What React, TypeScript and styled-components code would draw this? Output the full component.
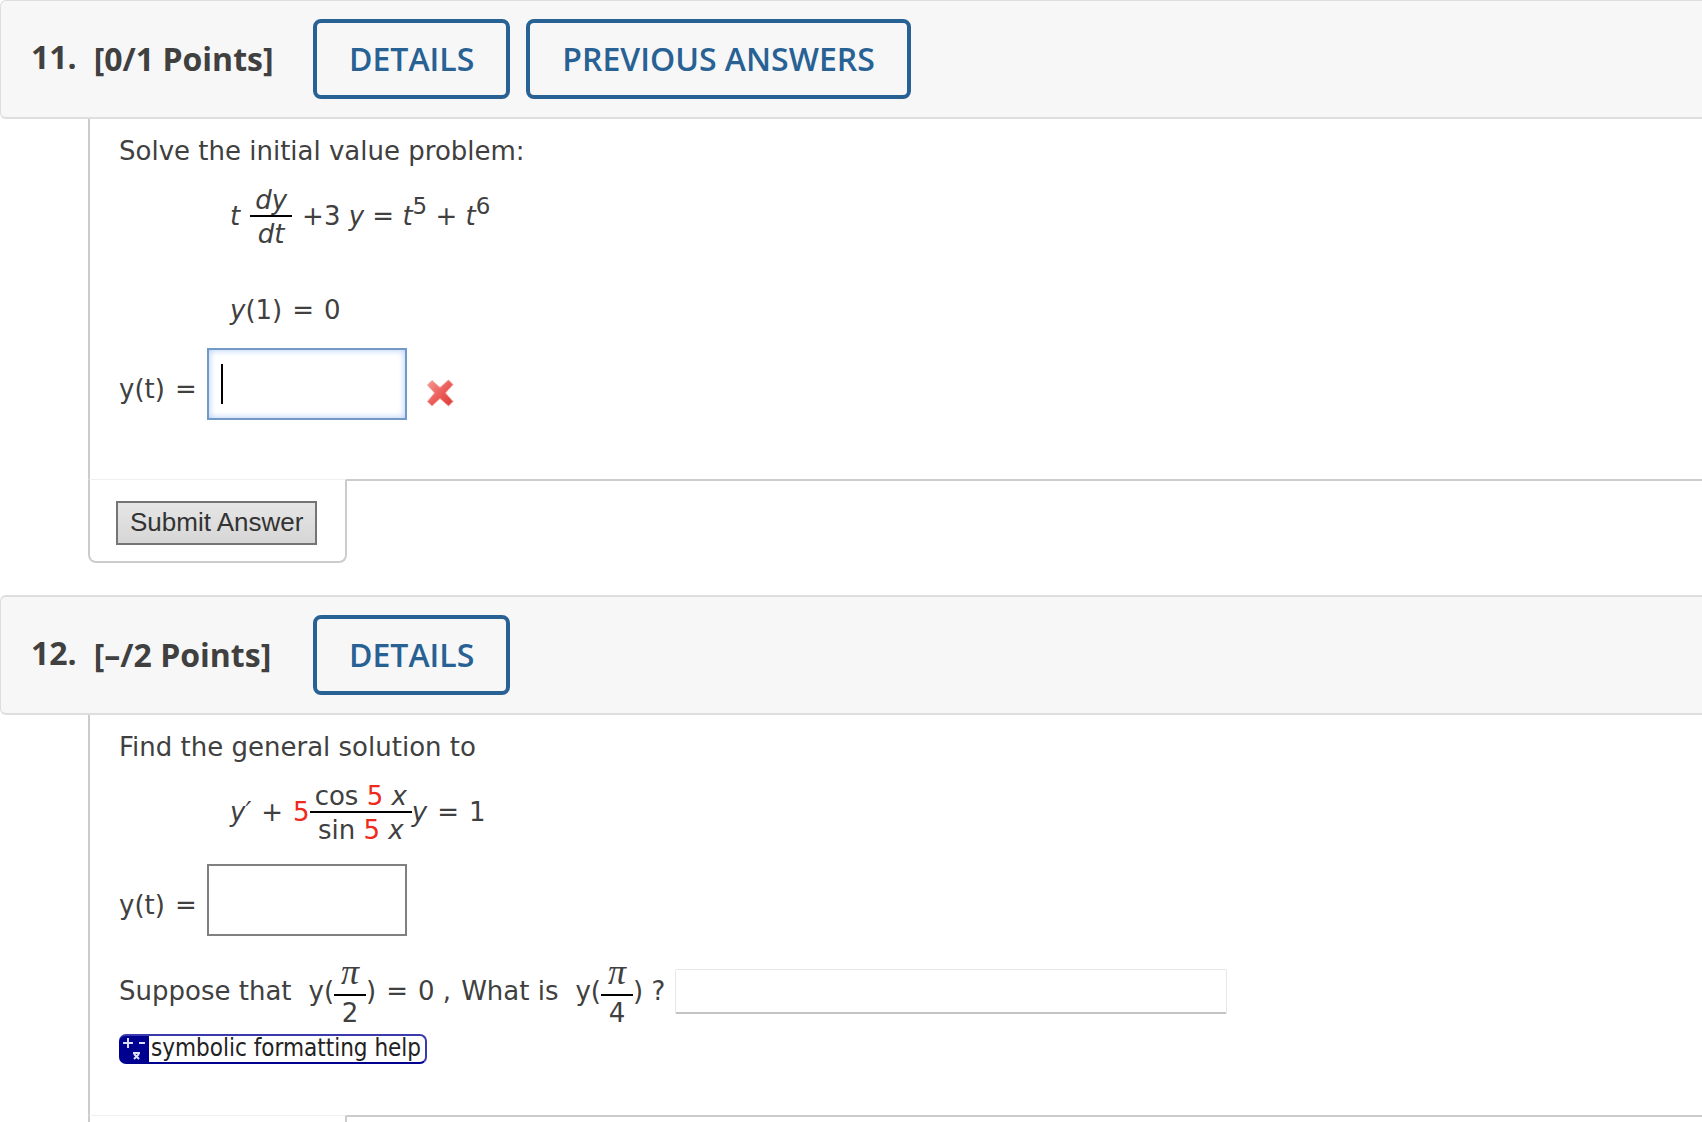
import React from "react";
import styled, { createGlobalStyle } from "styled-components";

const GlobalStyle = createGlobalStyle`
  *, *::before, *::after { box-sizing: border-box; }
  body {
    margin: 0;
    background: #fff;
    color: #404040;
    font-family: Verdana, "DejaVu Sans", sans-serif;
    font-size: 26px;
    line-height: 32px;
  }
`;

const Page = styled.main`
  height: 100vh;
  overflow: hidden;
`;

const Header = styled.header<{ $first?: boolean }>`
  display: flex;
  align-items: center;
  padding: 18px 30px;
  background: #f7f7f7;
  border: solid #dedede;
  border-width: ${(p) => (p.$first ? 1 : 2)}px 0 2px 1px;
  border-radius: 6px 0 0 6px;
  font-family: "Open Sans", sans-serif;
`;

const Title = styled.h2`
  display: flex;
  gap: 17px;
  width: 282px;
  margin: 0;
  padding-top: 2px;
  font-size: 32px;
  line-height: 40px;
  font-weight: 700;
  white-space: nowrap;
`;

const QuestionNumber = styled.span`
  padding-bottom: 4px;
  margin-top: -2px;
`;

const Actions = styled.div`
  display: flex;
  gap: 16px;
`;

const ActionButton = styled.button`
  height: 80px;
  padding: 0 32px 2px;
  border: 4px solid #286194;
  border-radius: 8px;
  background: #f7f7f7;
  color: #286194;
  font-family: "Open Sans", sans-serif;
  font-size: 32px;
  font-weight: 600;
  white-space: nowrap;
`;

const Body = styled.div<{ $bottom: number }>`
  margin-left: 88px;
  padding: 16px 0 ${(p) => p.$bottom}px 29px;
  border-left: 2px solid #ccc;
`;

const Prompt = styled.p`
  margin: 0;
`;

const Equation = styled.div<{ $top?: number }>`
  display: flex;
  align-items: center;
  margin-top: ${(p) => p.$top ?? 14}px;
  padding-left: 111px;
  white-space: pre;
`;

const Terms = styled.span`
  display: inline-flex;
  gap: 10px;
`;

const FractionBox = styled.span<{ $space?: number; $low?: boolean }>`
  display: inline-flex;
  flex-direction: column;
  text-align: center;
  margin: 0 ${(p) => p.$space ?? 0}px;
  padding-top: ${(p) => (p.$low ? 8 : 0)}px;
`;

const Numerator = styled.span`
  padding: 4px 5px 0;
  border-bottom: 2px solid #000;
  line-height: 30px;
`;

const Denominator = styled.span`
  padding: 0 5px;
  line-height: 34px;
`;

const Pi = styled.i`
  padding: 0 2px;
  font-family: "Liberation Serif", serif;
  font-size: 36px;
  line-height: 0;
  vertical-align: 4px;
`;

const Power = styled.sup`
  font-size: 23px;
  line-height: 0;
  vertical-align: 11px;
`;

const Variable = styled.span`
  color: #ee2a1c;
`;

const AnswerRow = styled.div<{ $top: number }>`
  display: flex;
  align-items: flex-end;
  margin-top: ${(p) => p.$top}px;
`;

const AnswerLabel = styled.label`
  display: flex;
  gap: 10px;
  width: 88px;
  padding-bottom: 15px;
  white-space: nowrap;
`;

const AnswerField = styled.span`
  position: relative;
  display: flex;
`;

const AnswerInput = styled.input<{ $active?: boolean }>`
  width: 200px;
  height: 72px;
  padding: 0 14px;
  border: 2px solid ${(p) => (p.$active ? "#7399c6" : "#808080")};
  background: #fff;
  box-shadow: ${(p) => (p.$active ? "inset 0 0 7px #a9caf5" : "none")};
  color: inherit;
  font: inherit;
  outline: none;
`;

const Caret = styled.span`
  position: absolute;
  left: 14px;
  top: 16px;
  width: 2px;
  height: 40px;
  background: #000;
`;

const WrongMark = styled.svg`
  width: 28px;
  height: 28px;
  margin: 0 0 13px 19px;
`;

const FollowUp = styled.div`
  display: flex;
  align-items: center;
  margin-top: 16px;
  gap: 10px;
`;

const FollowUpLabel = styled.label`
  display: flex;
  align-items: center;
  gap: 10px;
  white-space: pre;
`;

const Call = styled.span`
  display: flex;
  align-items: center;
  padding-left: 7px;
`;

const WideInput = styled.input`
  width: 552px;
  height: 45px;
  padding: 0 10px;
  border: 1px solid #e8e8e8;
  border-bottom: 2px solid #c4c4c4;
  border-radius: 2px;
  background: #fff;
  color: inherit;
  font: inherit;
`;

const HelpLink = styled.a`
  display: flex;
  width: 308px;
  height: 30px;
  margin-top: 4px;
  border: 2px solid #3a3aae;
  border-bottom-color: #00008f;
  border-left: 0;
  border-radius: 7px;
  background: linear-gradient(90deg, #000090 30px, #fff 30px);
  color: #222;
  font-family: "DejaVu Sans Condensed", "DejaVu Sans", sans-serif;
  font-size: 24px;
  line-height: 24px;
  text-decoration: none;
  white-space: nowrap;
`;

const HelpIcon = styled.svg`
  flex: none;
  width: 30px;
  height: 26px;
  margin-right: 2px;
`;

const Footer = styled.div`
  display: flex;
  align-items: flex-start;
  margin-left: 88px;
`;

const SubmitTab = styled.div<{ $cut?: boolean }>`
  width: 259px;
  height: ${(p) => (p.$cut ? "100px" : "auto")};
  padding: 21px 26px 16px;
  border: 2px solid #ccc;
  border-top: 1px solid #f0f0f0;
  border-radius: 0 0 8px 8px;
`;

const FooterRule = styled.div`
  flex: 1;
  border-top: 2px solid #ccc;
`;

const SubmitButton = styled.button`
  display: block;
  height: 44px;
  padding: 0 12px 2px;
  border: 2px solid #757575;
  background: linear-gradient(#e6e6e6, #d6d6d6);
  color: #333;
  font-family: Arial, "Liberation Sans", sans-serif;
  font-size: 26px;
  white-space: nowrap;
`;

const Question = styled.section`
  & + & { margin-top: 32px; }
`;

type FractionProps = {
  top: React.ReactNode;
  bottom: React.ReactNode;
  space?: number;
  low?: boolean;
};

function Fraction({ top, bottom, space, low }: FractionProps) {
  return (
    <FractionBox $space={space} $low={low}>
      <Numerator>{top}</Numerator>
      <Denominator>{bottom}</Denominator>
    </FractionBox>
  );
}

export default function App() {
  return (
    <Page>
      <GlobalStyle />
      <Question>
        <Header $first>
          <Title>
            <QuestionNumber>11.</QuestionNumber>
            <span>[0/1 Points]</span>
          </Title>
          <Actions>
            <ActionButton type="button">DETAILS</ActionButton>
            <ActionButton type="button">PREVIOUS ANSWERS</ActionButton>
          </Actions>
        </Header>
        <Body $bottom={59}>
          <Prompt>Solve the initial value problem:</Prompt>
          <Equation>
            <i>t</i>
            <Fraction space={10} top={<i>dy</i>} bottom={<i>dt</i>} />
            <span>
              +3 <i>y</i> = <i>t</i><Power>5</Power> + <i>t</i><Power>6</Power>
            </span>
          </Equation>
          <Equation $top={43}>
            <Terms>
              <span><i>y</i>(1)</span>
              <span>=</span>
              <span>0</span>
            </Terms>
          </Equation>
          <AnswerRow $top={22}>
            <AnswerLabel htmlFor="answer-11">
              <span>y(t)</span>
              <span>=</span>
            </AnswerLabel>
            <AnswerField>
              <AnswerInput id="answer-11" type="text" $active />
              <Caret />
            </AnswerField>
            <WrongMark viewBox="0 0 28 28" role="img" aria-label="Incorrect">
              <defs>
                <linearGradient id="cross" x1="0" y1="0" x2="1" y2="1">
                  <stop offset="0" stopColor="#f49a96" />
                  <stop offset="0.5" stopColor="#ec5f5b" />
                  <stop offset="1" stopColor="#dc3a35" />
                </linearGradient>
              </defs>
              <path
                d="M6 1.5 14 8.5 22.5 1 27 5.5 19.5 14 27 22.5 22.5 27 14 19.5 6 27 1.5 22.5 8.5 14 1.5 6Z"
                fill="url(#cross)"
                stroke="#f2a3a0"
                strokeWidth="1"
                strokeLinejoin="round"
              />
            </WrongMark>
          </AnswerRow>
        </Body>
        <Footer>
          <SubmitTab>
            <SubmitButton type="button">Submit Answer</SubmitButton>
          </SubmitTab>
          <FooterRule />
        </Footer>
      </Question>

      <Question>
        <Header>
          <Title>
            <QuestionNumber>12.</QuestionNumber>
            <span>[–/2 Points]</span>
          </Title>
          <Actions>
            <ActionButton type="button">DETAILS</ActionButton>
          </Actions>
        </Header>
        <Body $bottom={51}>
          <Prompt>Find the general solution to</Prompt>
          <Equation>
            <Terms>
              <i>y′</i>
              <span>+</span>
              <Variable>5</Variable>
            </Terms>
            <Fraction
              top={<>cos <Variable>5</Variable> <i>x</i></>}
              bottom={<>sin <Variable>5</Variable> <i>x</i></>}
            />
            <Terms>
              <i>y</i>
              <span>=</span>
              <span>1</span>
            </Terms>
          </Equation>
          <AnswerRow $top={17}>
            <AnswerLabel htmlFor="answer-12">
              <span>y(t)</span>
              <span>=</span>
            </AnswerLabel>
            <AnswerInput id="answer-12" type="text" />
          </AnswerRow>
          <FollowUp>
            <FollowUpLabel htmlFor="answer-12b">
              <span>Suppose that</span>
              <Call>
                y(
                <Fraction low top={<Pi>π</Pi>} bottom="2" />
                )
              </Call>
              <span>=</span>
              <span>0 ,</span>
              <span>What is</span>
              <Call>
                y(
                <Fraction low top={<Pi>π</Pi>} bottom="4" />
                ) ?
              </Call>
            </FollowUpLabel>
            <WideInput id="answer-12b" type="text" />
          </FollowUp>
          <HelpLink href="#symbolic-formatting">
            <HelpIcon viewBox="0 0 30 26" aria-hidden="true">
              <path
                d="M4 7h10M9 2v10M20 7h6M14 17h7M15 23l5-5M20 23l-5-5"
                fill="none"
                stroke="#dcdcff"
                strokeWidth="2"
              />
            </HelpIcon>
            symbolic formatting help
          </HelpLink>
        </Body>
        <Footer>
          <SubmitTab $cut />
          <FooterRule />
        </Footer>
      </Question>
    </Page>
  );
}
